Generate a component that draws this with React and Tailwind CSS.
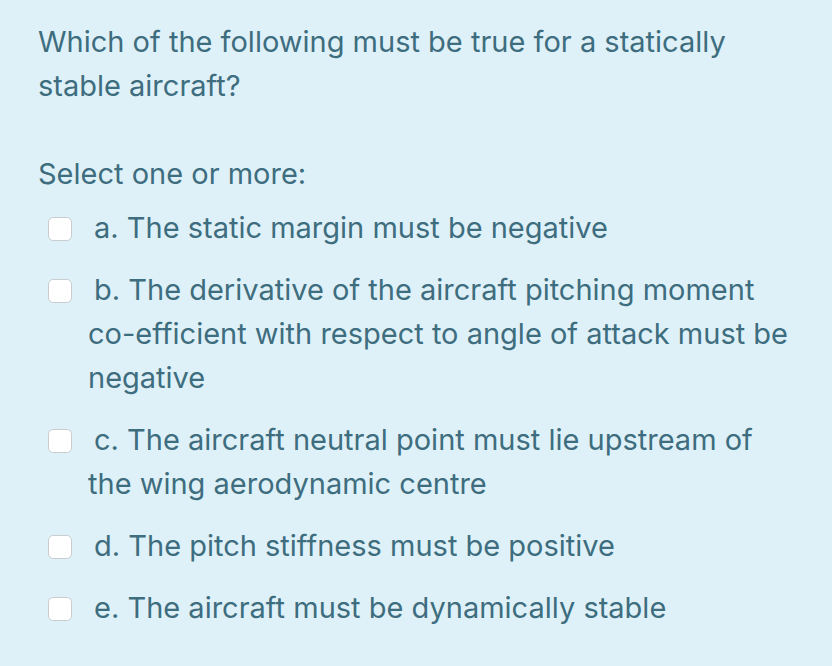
const options = [
  "a. The static margin must be negative",
  "b. The derivative of the aircraft pitching moment co-efficient with respect to angle of attack must be negative",
  "c. The aircraft neutral point must lie upstream of the wing aerodynamic centre",
  "d. The pitch stiffness must be positive",
  "e. The aircraft must be dynamically stable",
];

export default function App() {
  return (
    <div className="min-h-[666px] w-[832px] bg-[#dff1f8] pl-[38px] pr-[30px] pt-[20px] text-[#3d6d7e] font-['Inter',sans-serif] text-[29px] leading-[44px]">
      <p>Which of the following must be true for a statically stable aircraft?</p>
      <p className="mt-[44px]">Select one or more:</p>
      <div className="mt-[10px] flex flex-col gap-[18px]">
        {options.map((text) => (
          <div key={text} className="pl-[50px] indent-[-40px]">
            <span className="inline-block align-[-3px] h-[24px] w-[24px] mr-[22px] rounded-[5px] border border-[#c9cdd0] bg-white indent-0"></span>
            {text}
          </div>
        ))}
      </div>
    </div>
  );
}
